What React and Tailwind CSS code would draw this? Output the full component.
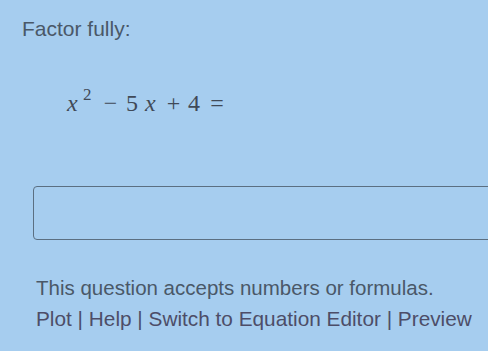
import React from 'react';

const App = () => {
  return (
    <div className="w-[488px] h-[351px] overflow-hidden bg-[#a6cdef] text-[#4a5868] font-['Liberation_Sans',Arial,sans-serif]">
      <div className="pt-[16px] pl-[22px] text-[21px] leading-[26px]">Factor fully:</div>

      {/* the equation, laid out like MathJax */}
      <div className="mt-[43px] pl-[67px] h-[30px] flex items-end font-['Liberation_Serif','Times_New_Roman',serif] text-[#404957] text-[24px] leading-[24px]">
        <span className="italic w-[16px]">x</span>
        <span className="text-[17px] leading-[17px] relative -top-[12px] w-[12px]">2</span>
        <span className="ml-[8px] w-[15px] text-center">−</span>
        <span className="ml-[8px] w-[12px]">5</span>
        <span className="italic ml-[7px] w-[13px]">x</span>
        <span className="ml-[8px] w-[15px] text-center">+</span>
        <span className="ml-[7px] w-[13px]">4</span>
        <span className="ml-[9px] w-[14px] text-center">=</span>
      </div>

      <div className="mt-[71px] ml-[33px] w-[470px] h-[54px] border-[1.5px] border-[#5b6f82] rounded-[4px]"></div>

      <div className="mt-[35px] pl-[36px] text-[20.5px] leading-[26px]">
        This question accepts numbers or formulas.
      </div>
      <div className="mt-[5px] pl-[36px] text-[20.8px] leading-[26px] text-[#4d4d68]">
        Plot | Help | Switch to Equation Editor | Preview
      </div>
    </div>
  );
};

export default App;
